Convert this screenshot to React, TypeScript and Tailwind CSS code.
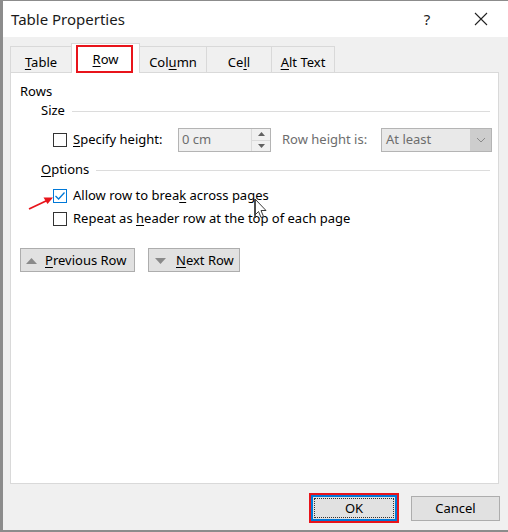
import React from "react";

const F = { fontFamily: '"Noto Sans", "Open Sans", sans-serif' };

function U({ children }: { children: React.ReactNode }) {
  return <span className="underline underline-offset-2 decoration-1">{children}</span>;
}

function Check({ checked }: { checked?: boolean }) {
  return (
    <div
      className={
        "w-[14px] h-[14px] bg-white border flex items-center justify-center shrink-0 " +
        (checked ? "border-[#0078d7]" : "border-[#333333]")
      }
    >
      {checked && (
        <svg width="12" height="12" viewBox="0 0 12 12">
          <path d="M1.5 6 L4.6 9 L10.5 2.5" fill="none" stroke="#0078d7" strokeWidth="1.3" />
        </svg>
      )}
    </div>
  );
}

function Tab({ label, w, selected }: { label: React.ReactNode; w: string; selected?: boolean }) {
  if (selected) {
    return (
      <div className={`${w} h-[30px] -mb-px bg-white border border-b-0 border-[#d9d9d9] relative z-10 flex items-center justify-center pt-[3px] text-[13px] text-black`}>
        {label}
      </div>
    );
  }
  return (
    <div className={`${w} h-[26px] bg-[#f0f0f0] border border-b-0 border-[#d9d9d9] -ml-px flex items-center justify-center pt-[6px] text-[13px] text-black`}>
      {label}
    </div>
  );
}

export default function App() {
  return (
    <div className="w-[508px] h-[532px] bg-white relative overflow-hidden" style={F}>
      <div className="w-[508px] h-[532px] border-l-[3px] border-t border-b-2 border-[#8c8c8c] flex flex-col bg-[#f0f0f0]">
        {/* Title bar */}
        <div className="h-[36px] bg-white flex items-center shrink-0">
          <div className="ml-[8px] text-[15px] text-[#1a1a1a]">Table Properties</div>
          <div className="ml-auto w-[24px] text-center text-[15px] text-[#222] mr-[32px]">?</div>
          <div className="w-[20px] mr-[17px] flex justify-center">
            <svg width="14" height="14" viewBox="0 0 14 14">
              <path d="M1 1 L13 13 M13 1 L1 13" stroke="#222" strokeWidth="1.1" />
            </svg>
          </div>
        </div>

        {/* Body */}
        <div className="flex-1 flex flex-col">
          {/* Tabs */}
          <div className="h-[35px] flex items-end pl-[8px] shrink-0">
            <Tab w="w-[62px]" label={<span><U>T</U>able</span>} />
            <div className="relative -ml-px">
              <Tab w="w-[69px]" selected label={<span><U>R</U>ow</span>} />
              <div className="absolute left-[5px] top-[2px] w-[57px] h-[28px] border-2 border-[#e8141b] z-20 pointer-events-none" />
            </div>
            <Tab w="w-[68px]" label={<span>Col<U>u</U>mn</span>} />
            <Tab w="w-[66px]" label={<span>Ce<U>l</U>l</span>} />
            <Tab w="w-[64px]" label={<span><U>A</U>lt Text</span>} />
          </div>

          {/* Panel */}
          <div className="ml-[7px] w-[489px] h-[412px] bg-white border border-[#d9d9d9] shrink-0 flex flex-col pl-[9px] text-[13px] text-black">
            <div className="h-[20px] mt-[9px] flex items-center">Rows</div>
            <div className="h-[18px] flex items-center pl-[21px] pr-[8px]">
              <span>Size</span>
              <div className="flex-1 h-px bg-[#dcdcdc] ml-[7px]" />
            </div>
            <div className="h-[24px] mt-[8px] flex items-center pl-[33px]">
              <Check />
              <span className="ml-[6px] w-[105px]"><U>S</U>pecify height:</span>
              <div className="w-[93px] h-[24px] border border-[#b4b4b4] bg-[#f0f0f0] flex">
                <div className="flex-1 flex items-center pl-[3px] text-[#6d6d6d]">0 cm</div>
                <div className="w-[19px] flex flex-col border-l border-[#dadada]">
                  <div className="flex-1 flex items-center justify-center border-b border-[#dadada]">
                    <svg width="7" height="4" viewBox="0 0 7 4"><path d="M0 4 L3.5 0 L7 4 Z" fill="#606060" /></svg>
                  </div>
                  <div className="flex-1 flex items-center justify-center">
                    <svg width="7" height="4" viewBox="0 0 7 4"><path d="M0 0 L3.5 4 L7 0 Z" fill="#606060" /></svg>
                  </div>
                </div>
              </div>
              <span className="ml-[11px] w-[99px] text-[#6d6d6d]">Row height is:</span>
              <div className="w-[111px] h-[24px] border border-[#b4b4b4] bg-[#e9e9e9] flex">
                <div className="flex-1 flex items-center pl-[4px] text-[#6d6d6d]">At least</div>
                <div className="w-[21px] bg-[#cdcdcd] flex items-center justify-center">
                  <svg width="10" height="6" viewBox="0 0 10 6"><path d="M1 1 L5 5 L9 1" fill="none" stroke="#8a8a8a" strokeWidth="1" /></svg>
                </div>
              </div>
            </div>
            <div className="h-[18px] mt-[9px] flex items-center pl-[21px] pr-[8px]">
              <span><U>O</U>ptions</span>
              <div className="flex-1 h-px bg-[#dcdcdc] ml-[7px]" />
            </div>
            <div className="h-[20px] mt-[7px] flex items-center pl-[33px]">
              <Check checked />
              <span className="ml-[6px]">Allow row to brea<U>k</U> across pages</span>
            </div>
            <div className="h-[20px] mt-[3px] flex items-center pl-[33px]">
              <Check />
              <span className="ml-[6px]">Repeat as <U>h</U>eader row at the top of each page</span>
            </div>
            <div className="flex mt-[19px] gap-[13px]">
              <div className="w-[115px] h-[24px] bg-[#e1e1e1] border border-[#adadad] flex items-center pl-[5px] pt-[2px]">
                <svg width="11" height="6" viewBox="0 0 11 6"><path d="M0 6 L5.5 0 L11 6 Z" fill="#8a8a8a" /></svg>
                <span className="ml-[8px]"><U>P</U>revious Row</span>
              </div>
              <div className="w-[92px] h-[24px] bg-[#e1e1e1] border border-[#adadad] flex items-center pl-[6px] pt-[2px]">
                <svg width="11" height="6" viewBox="0 0 11 6"><path d="M0 0 L5.5 6 L11 0 Z" fill="#8a8a8a" /></svg>
                <span className="ml-[10px]"><U>N</U>ext Row</span>
              </div>
            </div>
          </div>

          {/* Bottom buttons */}
          <div className="flex items-center mt-[9px] pl-[306px] text-[13px] text-black">
            <div className="w-[90px] h-[30px] border-2 border-[#e8141b] flex">
              <div className="flex-1 border-2 border-[#0078d7] bg-[#e1e1e1] p-[1px] flex">
                <div className="flex-1 border border-dotted border-[#333] flex items-center justify-center pt-[1px]">OK</div>
              </div>
            </div>
            <div className="ml-[12px] w-[89px] h-[25px] bg-[#e1e1e1] border border-[#adadad] flex items-center justify-center pt-[1px]">
              Cancel
            </div>
          </div>
        </div>
      </div>

      {/* red annotation arrow */}
      <svg className="absolute left-[26px] top-[193px]" width="30" height="20" viewBox="0 0 30 20">
        <path d="M3 16 L21 7.5" stroke="#e8141b" strokeWidth="1.8" />
        <path d="M27 4.5 L17.5 4.5 L21.5 11 Z" fill="#e8141b" />
      </svg>

      {/* mouse cursor */}
      <svg className="absolute left-[254px] top-[198px]" width="14" height="22" viewBox="0 0 14 22">
        <path d="M1 1 L1 17 L4.5 13.5 L7 19.5 L9.5 18.5 L7 12.5 L12 12.5 Z" fill="#ffffff" stroke="#3a3a3a" strokeWidth="1" strokeLinejoin="round" />
        <path d="M1 1 L1 20" stroke="#3a3a3a" strokeWidth="1.6" />
      </svg>
    </div>
  );
}
